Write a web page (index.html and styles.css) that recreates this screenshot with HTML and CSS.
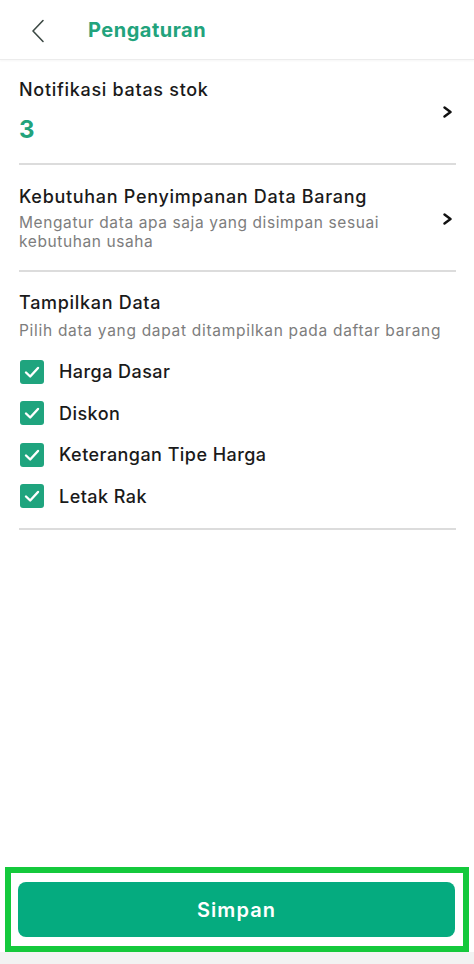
FILE: index.html
```html
<!DOCTYPE html>
<html lang="id">
<head>
<meta charset="utf-8">
<title>Pengaturan</title>
<link rel="stylesheet" href="styles.css">
</head>
<body>
<div class="page">
  <header class="topbar">
    <button class="back" aria-label="Kembali">
      <svg width="14" height="24" viewBox="0 0 14 24"><path d="M12 1.5 L2 12 L12 22.5" fill="none" stroke="#3d4a45" stroke-width="1.6" stroke-linecap="round" stroke-linejoin="round"/></svg>
    </button>
    <h1 class="title">Pengaturan</h1>
  </header>

  <main class="content">
    <section class="row row-stock">
      <div class="row-text">
        <div class="row-title">Notifikasi batas stok</div>
        <div class="row-value">3</div>
      </div>
      <svg class="chev" width="11" height="12" viewBox="0 0 11 12"><path d="M2.5 1.5 L8.5 6 L2.5 10.5" fill="none" stroke="#111" stroke-width="2.4" stroke-linecap="round" stroke-linejoin="round"/></svg>
    </section>

    <section class="row row-storage">
      <div class="row-text">
        <div class="row-title">Kebutuhan Penyimpanan Data Barang</div>
        <div class="row-sub">Mengatur data apa saja yang disimpan sesuai kebutuhan usaha</div>
      </div>
      <svg class="chev" width="11" height="12" viewBox="0 0 11 12"><path d="M2.5 1.5 L8.5 6 L2.5 10.5" fill="none" stroke="#111" stroke-width="2.4" stroke-linecap="round" stroke-linejoin="round"/></svg>
    </section>

    <section class="row row-display">
      <div class="row-text">
        <div class="row-title">Tampilkan Data</div>
        <div class="row-sub single">Pilih data yang dapat ditampilkan pada daftar barang</div>
        <ul class="checks">
          <li class="check"><svg class="box" width="24" height="24" viewBox="0 0 24 24"><rect width="24" height="24" rx="3" fill="#1fa47e"/><path d="M6 12.5 L10.2 16.5 L18 8" fill="none" stroke="#fff" stroke-width="2.4" stroke-linecap="round" stroke-linejoin="round"/></svg><span>Harga Dasar</span></li>
          <li class="check"><svg class="box" width="24" height="24" viewBox="0 0 24 24"><rect width="24" height="24" rx="3" fill="#1fa47e"/><path d="M6 12.5 L10.2 16.5 L18 8" fill="none" stroke="#fff" stroke-width="2.4" stroke-linecap="round" stroke-linejoin="round"/></svg><span>Diskon</span></li>
          <li class="check"><svg class="box" width="24" height="24" viewBox="0 0 24 24"><rect width="24" height="24" rx="3" fill="#1fa47e"/><path d="M6 12.5 L10.2 16.5 L18 8" fill="none" stroke="#fff" stroke-width="2.4" stroke-linecap="round" stroke-linejoin="round"/></svg><span>Keterangan Tipe Harga</span></li>
          <li class="check"><svg class="box" width="24" height="24" viewBox="0 0 24 24"><rect width="24" height="24" rx="3" fill="#1fa47e"/><path d="M6 12.5 L10.2 16.5 L18 8" fill="none" stroke="#fff" stroke-width="2.4" stroke-linecap="round" stroke-linejoin="round"/></svg><span>Letak Rak</span></li>
        </ul>
      </div>
    </section>
  </main>

  <footer class="footer">
    <div class="highlight">
      <button class="save">Simpan</button>
    </div>
    <div class="bottom-band"></div>
  </footer>
</div>
</body>
</html>
```

FILE: styles.css
```css
* { box-sizing: border-box; }
html, body { margin: 0; padding: 0; background: #fff; }
body {
  font-family: Inter, "Open Sans", "Liberation Sans", sans-serif;
  color: #1a1a1a;
}
.page {
  width: 474px;
  height: 964px;
  display: flex;
  flex-direction: column;
  overflow: hidden;
}
.topbar {
  height: 60px;
  flex: none;
  display: flex;
  align-items: center;
  border-bottom: 1px solid #ececec;
  box-shadow: 0 1px 2px rgba(0,0,0,0.04);
}
.back {
  width: 14px;
  height: 24px;
  margin-left: 31px;
  padding: 0;
  border: 0;
  background: none;
  display: flex;
  margin-top: 3px;
}
.title {
  margin: 0 0 0 43px;
  font-size: 20px;
  font-weight: 700;
  color: #22a37c;
  letter-spacing: 0.5px;
  line-height: 24px;
}
.content {
  padding: 0 18px 0 19px;
}
.row {
  display: flex;
  align-items: center;
  border-bottom: 2px solid #dcdcdc;
}
.row-text { flex: 1; min-width: 0; }
.chev { flex: none; margin-right: 3px; }
.row-title {
  font-size: 18px;
  font-weight: 500;
  line-height: 22px;
  letter-spacing: 0.7px;
}
.row-stock { padding: 19px 0 18px; }
.row-value {
  margin-top: 14px;
  font-size: 24px;
  font-weight: 700;
  line-height: 30px;
  color: #22a37c;
}
.row-storage { padding: 21px 0 19px; }
.row-sub {
  margin-top: 5px;
  font-size: 15.5px;
  line-height: 19px;
  color: #7d7d7d;
  letter-spacing: 0.6px;
  padding-right: 40px;
}
.row-sub.single { margin-top: 7px; padding-right: 0; letter-spacing: 0.7px; white-space: nowrap; }
.row-display { padding: 20px 0 11px; }
.checks {
  list-style: none;
  margin: 11px 0 0;
  padding: 0;
}
.check {
  height: 41.5px;
  display: flex;
  align-items: center;
}
.box { flex: none; margin-left: 1px; }
.check span {
  margin-left: 15px;
  font-size: 18px;
  font-weight: 500;
  letter-spacing: 0.45px;
}
.footer {
  margin-top: auto;
  flex: none;
}
.highlight {
  margin: 0 5px;
  border: 6px solid #14c93c;
  padding: 9px 8px 9px 7px;
}
.save {
  display: block;
  width: 100%;
  height: 55px;
  border: 0;
  border-radius: 8px;
  background: #05ab7f;
  color: #fff;
  font-family: Inter, "Open Sans", "Liberation Sans", sans-serif;
  font-size: 20px;
  font-weight: 600;
  letter-spacing: 1.1px;
}
.bottom-band {
  height: 12px;
  background: #f2f2f2;
}
```
